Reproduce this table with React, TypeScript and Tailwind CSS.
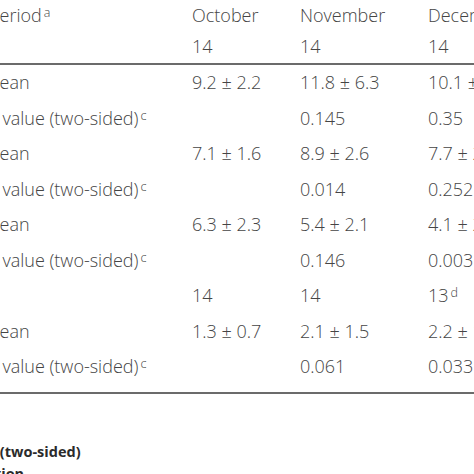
import React from 'react';

type Row = { label: React.ReactNode; oct: React.ReactNode; nov: React.ReactNode; dec: React.ReactNode };

const Sup = ({ children }: { children: React.ReactNode }) => (
  <sup className="text-[12.5px] ml-[2px] relative -top-[5px]">{children}</sup>
);

const pValue = (
  <>
    p value (two-sided)<Sup>c</Sup>
  </>
);

const mean = <span className="inline-block -ml-[3px]">Mean</span>;

const rows: Row[] = [
  { label: mean, oct: '9.2 ± 2.2', nov: '11.8 ± 6.3', dec: '10.1 ± 4.0' },
  { label: pValue, oct: '', nov: '0.145', dec: '0.35' },
  { label: mean, oct: '7.1 ± 1.6', nov: '8.9 ± 2.6', dec: '7.7 ± 2.0' },
  { label: pValue, oct: '', nov: '0.014', dec: '0.252' },
  { label: mean, oct: '6.3 ± 2.3', nov: '5.4 ± 2.1', dec: '4.1 ± 2.2' },
  { label: pValue, oct: '', nov: '0.146', dec: '0.003' },
  {
    label: '',
    oct: '14',
    nov: '14',
    dec: (
      <>
        13<Sup>d</Sup>
      </>
    ),
  },
  { label: mean, oct: '1.3 ± 0.7', nov: '2.1 ± 1.5', dec: '2.2 ± 1.4' },
  { label: pValue, oct: '', nov: '0.061', dec: '0.033' },
];

function Cells({ row, className, labelClass = '' }: { row: Row; className: string; labelClass?: string }) {
  return (
    <div className={`grid grid-cols-[205px_108px_128px_140px] items-center ${className}`}>
      <div className={`whitespace-nowrap ${labelClass}`}>{row.label}</div>
      <div className="whitespace-nowrap">{row.oct}</div>
      <div className="whitespace-nowrap">{row.nov}</div>
      <div className="whitespace-nowrap">{row.dec}</div>
    </div>
  );
}

export default function App() {
  return (
    <div
      className="w-[474px] h-[474px] overflow-hidden bg-white text-[#454545]"
      style={{ fontFamily: '"Open Sans", "Noto Sans", sans-serif' }}
    >
      <div className="-ml-[13px] w-[590px] text-[18px] font-light">
        {/* header */}
        <Cells
          className="h-[30px]"
          labelClass="pl-[2px]"
          row={{
            label: (
              <>
                Period<Sup>a</Sup>
              </>
            ),
            oct: 'October',
            nov: 'November',
            dec: 'December',
          }}
        />
        <Cells className="h-[33px]" row={{ label: '', oct: '14', nov: '14', dec: '14' }} />
        <div className="h-[2px] bg-[#6b6b6b]" />

        {/* body */}
        {rows.map((r, i) => (
          <Cells key={i} row={r} className="h-[35.5px]" />
        ))}
        <div className="h-[7px]" />
        <div className="h-[2px] bg-[#6b6b6b]" />

        {/* footnotes */}
        <div className="pt-[47px] text-[14.5px] font-bold text-[#2b2b2b] leading-[22px]">
          <div className="-ml-[52px] whitespace-nowrap">ᶜ p value (two-sided)</div>
          <div className="-ml-[123px] whitespace-nowrap">SD standard deviation</div>
        </div>
      </div>
    </div>
  );
}
